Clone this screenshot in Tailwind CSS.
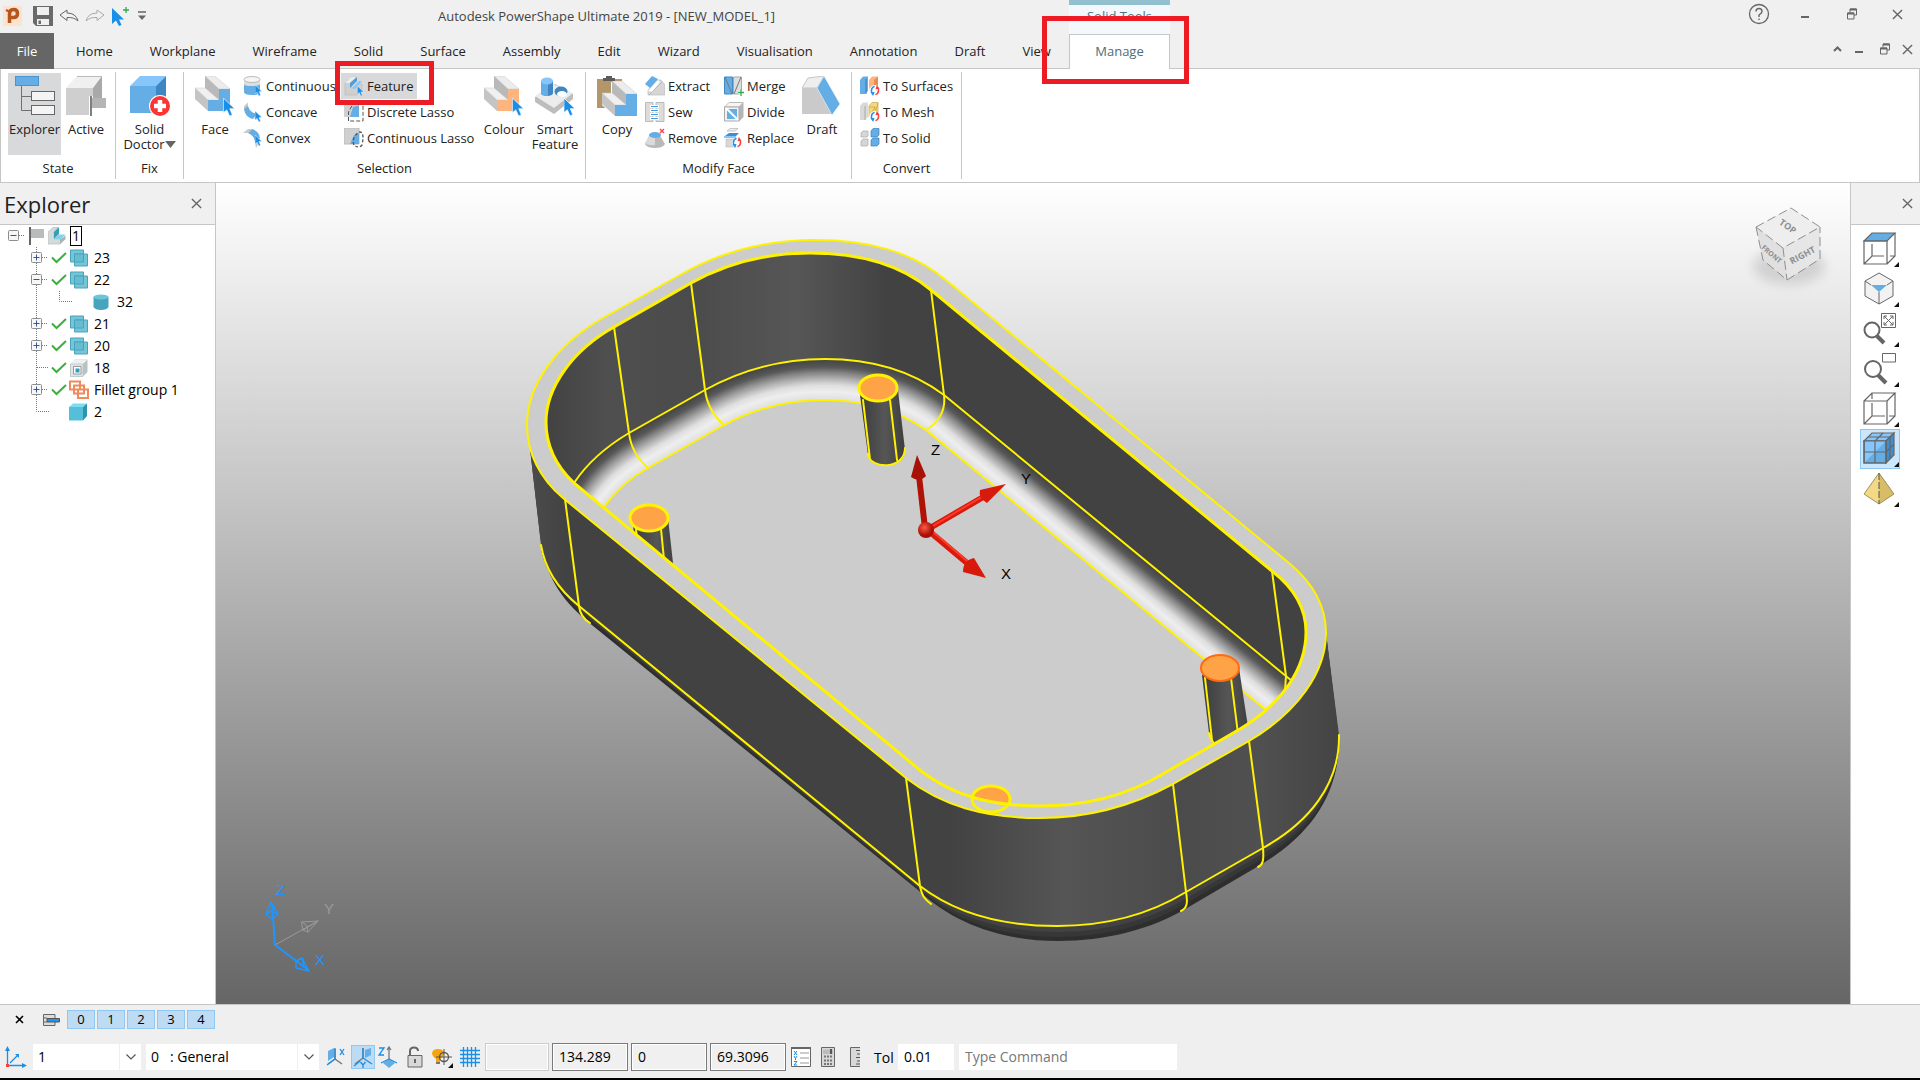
<!DOCTYPE html>
<html lang="en">
<head>
<meta charset="UTF-8">
<title>Autodesk PowerShape Ultimate 2019 - [NEW_MODEL_1]</title>
<meta name="viewport" content="width=device-width, initial-scale=1.0">
<script src="https://cdn.jsdelivr.net/npm/@tailwindcss/browser@4"></script>
<script>
addEventListener("DOMContentLoaded", () => {
    drawFillet();
});

// Inner fillet of the tray: blend from the wall edge to the floor edge
const wallEdge = [574,483, 588,462, 607,446, 629,433, 705,390, 741,370, 782,359, 825,359, 872,359, 912,371, 944,395, 1292,681];
const floorEdge = [604,507, 616,490, 630,478, 648,468, 724,425, 756,408, 790,400, 824,400, 865,400, 900,412, 926,430, 1267,711];
const shades = [[0, 68], [0.18, 88], [0.42, 165], [0.62, 222], [0.78, 238], [1, 222]];

function shadeAt(t) {
    for (let i = 1; i < shades.length; i++) {
        const [t0, s0] = shades[i - 1];
        const [t1, s1] = shades[i];
        if (t <= t1) {
            return Math.round(s0 + (s1 - s0) * (t - t0) / (t1 - t0));
        }
    }
    return 222;
}

function drawFillet() {
    const group = document.getElementById("fillet");
    const steps = 40;
    for (let i = 0; i <= steps; i++) {
        const t = i / steps;
        const p = wallEdge.map((v, k) => v + (floorEdge[k] - v) * t);
        const path = document.createElementNS("http://www.w3.org/2000/svg", "path");
        const s = i === steps ? 204 : shadeAt(t);
        path.setAttribute("d", `M${p[0]},${p[1]} C${p.slice(2, 8)} L${p[8]},${p[9]} C${p.slice(10, 16)} C${p.slice(16, 22)} L${p[22]},${p[23]} L1320,900 L500,900Z`);
        path.setAttribute("fill", `rgb(${s},${s},${s})`);
        group.appendChild(path);
    }
}
</script>
</head>
<body class="h-screen flex flex-col overflow-hidden bg-[#f0f0f0] font-['Open_Sans',sans-serif] text-[13px] text-[#222]">

<svg class="absolute size-0" aria-hidden="true">
  <defs>
    <symbol id="pointer" viewBox="0 0 10 16"><path d="M0 0V13L3 10.500L5.500 16L8 15L5.700 9.500H10Z" fill="#1a8fe8" stroke="#fff" stroke-width=".6"/></symbol>
    <symbol id="restore" viewBox="0 0 10 12"><path d="M3 4V1H9.500V7H7M.5 5H7V11H.5Z" fill="none" stroke="#666"/><path d="M3 1.500H9.500M.5 5.500H7" stroke="#666" stroke-width="2"/></symbol>
    <symbol id="close" viewBox="0 0 12 12"><path d="M1 1L11 11M11 1L1 11" stroke="#666" stroke-width="1.500"/></symbol>
    <symbol id="chevron" viewBox="0 0 10 6"><path d="M.5 .5L5 5L9.500 .5" fill="none" stroke="#555" stroke-width="1.200"/></symbol>
    <symbol id="swap" viewBox="0 0 10 12"><path d="M4.500 1.500Q0 3 1.500 8.500" fill="none" stroke="#1a8fe8" stroke-width="1.600"/><path d="M0 8L4.500 7.500L3 12Z" fill="#1a8fe8"/><path d="M5.500 10.500Q10 9 8.500 3.500" fill="none" stroke="#fa3e3e" stroke-width="1.600"/><path d="M10 4L5.500 4.500L7 0Z" fill="#fa3e3e"/></symbol>

    <!-- tree pieces -->
    <g id="box"><rect x="1.500" y="5.500" width="10" height="10" rx="1" fill="#f7f7f7" stroke="#8d8d8d"/><path d="M3.500 10.500H9.500" stroke="#35559b"/></g>
    <symbol id="t-plus" viewBox="0 0 20 22"><path d="M6.500 0V22M12 10.500H18" stroke="#777" stroke-dasharray="1 1"/><use href="#box"/><path d="M6.500 7.500V13.500" stroke="#35559b"/></symbol>
    <symbol id="t-minus" viewBox="0 0 20 22"><path d="M6.500 0V22M12 10.500H18" stroke="#777" stroke-dasharray="1 1"/><use href="#box"/></symbol>
    <symbol id="t-leaf" viewBox="0 0 20 22"><path d="M6.500 0V22M7 10.500H19" stroke="#777" stroke-dasharray="1 1"/></symbol>
    <symbol id="t-line" viewBox="0 0 20 22"><path d="M6.500 0V22" stroke="#777" stroke-dasharray="1 1"/></symbol>
    <symbol id="t-end" viewBox="0 0 20 22"><path d="M6.500 0V10.500H19" fill="none" stroke="#777" stroke-dasharray="1 1"/></symbol>
    <symbol id="check" viewBox="0 0 16 12"><path d="M1 5.500L5.500 10L15 1" fill="none" stroke="#3bb13b" stroke-width="2"/></symbol>
    <symbol id="bool" viewBox="0 0 18 18"><path d="M.5 1H13.500V13H.5Z" fill="#74c5d8" stroke="#4aa3bb"/><path d="M4.500 5H17.500V17H4.500Z" fill="#74c5d8" stroke="#4aa3bb"/><path d="M4.500 5H13.500V13H4.500Z" fill="#66bdd2" stroke="#4aa3bb"/></symbol>

    <!-- ribbon, 40px -->
    <symbol id="i-explorer" viewBox="0 0 40 40"><rect x=".5" y=".5" width="23" height="9" fill="#64ade5" stroke="#4d94cc"/><path d="M6.500 10V34.500H17M6.500 20.500H17" fill="none" stroke="#707070"/><rect x="16.500" y="15.500" width="23" height="9" fill="#f4f4f4" stroke="#666"/><rect x="16.500" y="29.500" width="23" height="9" fill="#f4f4f4" stroke="#666"/></symbol>
    <symbol id="i-active" viewBox="0 0 40 40"><path d="M0 12L11 0H36L27 12Z" fill="#f0f0f0"/><path d="M0 12H27V39H0Z" fill="#cfcfcf"/><path d="M27 12L36 0V22H27Z" fill="#a9a9a9"/><path d="M11 .5H36" stroke="#bbb"/><path d="M25 20V40" stroke="#fff" stroke-width="4"/><path d="M25 20V40" stroke="#555" stroke-width="1.500"/><path d="M26 22H40V32H26Z" fill="#b5b5b5"/></symbol>
    <symbol id="i-doctor" viewBox="0 0 40 40"><path d="M0 10L10 0H36L26 10Z" fill="#86c6fa"/><path d="M0 10H27V37H0Z" fill="#64ade5"/><path d="M26 10L36 0V27L26 37Z" fill="#3c87c4"/><circle cx="30" cy="30" r="11" fill="#fff"/><circle cx="30" cy="30" r="10" fill="#fb3434"/><path d="M30 24V36M24 30H36" stroke="#fff" stroke-width="4.500"/></symbol>
    <symbol id="steps" viewBox="0 0 40 40">
      <path d="M10 0H20L35 13H24Z" fill="#ececec" stroke="#c8c8c8" stroke-width=".5"/>
      <path d="M10 0L24 13V24L10 12Z" fill="#b9b9b9"/>
      <path d="M0 12H10L24 24H13Z" fill="#f0f0f0" stroke="#c8c8c8" stroke-width=".5"/>
      <path d="M0 12L13 24V35L0 23Z" fill="#c4c4c4"/>
      <path d="M24 13H35V35H13V24H24Z" fill="currentColor"/>
    </symbol>
    <symbol id="i-face" viewBox="0 0 40 40"><use href="#steps" color="#64ade5"/><use href="#pointer" x="28" y="22" width="12" height="18"/></symbol>
    <symbol id="i-colour" viewBox="0 0 40 40"><use href="#steps" color="#ffb37d"/><use href="#pointer" x="28" y="22" width="12" height="18"/></symbol>
    <symbol id="i-smart" viewBox="0 0 40 40"><path d="M0 21L20 8L38 18V23L19 38L0 26Z" fill="#bdbdbd"/><path d="M0 20L18 8L38 17L19 32Z" fill="#ececec"/><path d="M6 5V17C6 21 18 21 18 17V5Z" fill="#3f87c4"/><path d="M6 5V17C6 20 13 20 13 20V5Z" fill="#64ade5"/><ellipse cx="12" cy="5" rx="6" ry="3.500" fill="#86c6fa"/><ellipse cx="26" cy="15.500" rx="6.500" ry="5" fill="#3f87c4"/><ellipse cx="27" cy="18" rx="5" ry="3" fill="#fff"/><use href="#pointer" x="29" y="22" width="11" height="18"/></symbol>
    <symbol id="i-copy" viewBox="0 0 40 40"><path d="M0 3H25V32H0Z" fill="#b4966b"/><path d="M6 2H9V0H15V2H18V5H6Z" fill="#5c5c5c"/><path d="M5 17H14V6H26L40 17V40H17L5 29Z" fill="#fff"/><use href="#steps" x="5" y="5" width="40" height="40" color="#64ade5"/></symbol>
    <symbol id="i-draft" viewBox="0 0 40 40"><path d="M0 12L6 2L22 0L15 12Z" fill="#eee" stroke="#c5c5c5"/><path d="M0 12H15L30 38H0Z" fill="#cacaca"/><path d="M15 12L22 0L38 28L30 39Z" fill="#64ade5" stroke="#fff" stroke-width=".5"/></symbol>

    <!-- ribbon, 20px -->
    <symbol id="i-continuous" viewBox="0 0 20 20"><path d="M1 3V16Q1 19 9 19T17 16V3Z" fill="#64ade5"/><path d="M1 3V8Q1 10 9 10T17 8V3Z" fill="#ddd"/><ellipse cx="9" cy="3.500" rx="8" ry="3" fill="#f5f5f5" stroke="#bbb"/><use href="#pointer" x="12" y="9" width="7" height="11"/></symbol>
    <symbol id="i-concave" viewBox="0 0 20 20"><path d="M1 4L5 .5V5L1 9Z" fill="#c9c9c9"/><path d="M1 7L5 4Q7 11 14 12L10 17Q2 15 1 7Z" fill="#64ade5"/><path d="M11 17L14 13H18L15 18Z" fill="#d8d8d8"/><use href="#pointer" x="12" y="9" width="7" height="11"/></symbol>
    <symbol id="i-convex" viewBox="0 0 20 20"><path d="M0 5L5 1H9L5 5ZM12 15L16 11V15L13 20Z" fill="#c9c9c9"/><path d="M5 5L9 1Q16 3 17 10L12 15Q12 8 5 5Z" fill="#64ade5"/><use href="#pointer" x="12" y="7" width="7" height="11"/></symbol>
    <symbol id="i-feature" viewBox="0 0 20 20"><path d="M1 7L7 1H12L7 6V12H11L15 8H18V14L13 19H1Z" fill="#cfcfcf" stroke="#bbb" stroke-width=".7"/><path d="M1 7L7 1H12L6 7Z" fill="#ececec"/><path d="M6 7L13 1V5L6 12Z" fill="#4f9edb"/><path d="M8 12L15 5H18L11 13Z" fill="#86c6fa"/><use href="#pointer" x="13" y="10" width="7" height="10"/></symbol>
    <symbol id="i-dlasso" viewBox="0 0 20 20"><path d="M0 .5H13V15H0Z" fill="#d0d0d0"/><path d="M6 15L9 5L15 3V15Z" fill="#64ade5"/><path d="M4.500 19V10L9 2H19V19Z" fill="none" stroke="#555" stroke-dasharray="4 2"/></symbol>
    <symbol id="i-classo" viewBox="0 0 20 20"><path d="M0 0H15V16H0Z" fill="#d0d0d0" stroke="#bbb"/><path d="M6 16L10 7L15 5V16Z" fill="#64ade5"/><path d="M10 17Q8 13 11 8Q15 2 18 5Q20 8 18 17Q15 21 10 17Z" fill="none" stroke="#555" stroke-width="1.300" stroke-dasharray="3 2"/></symbol>
    <symbol id="i-extract" viewBox="0 0 20 20"><path d="M3 14L12 4H16L20 9V19H3Z" fill="#d6d6d6" stroke="#bbb" stroke-width=".7"/><path d="M3 15L13 4L15 6L7 16Z" fill="#fff"/><path d="M4 19L17 6" stroke="#aaa" stroke-width=".7"/><path d="M0 8L7 0L13 3L5 12Z" fill="#64ade5"/></symbol>
    <symbol id="i-sew" viewBox="0 0 20 20"><path d="M.5 .5H8V19.500H.5ZM11 .5H19V19.500H11Z" fill="#dcdcdc" stroke="#bbb"/><path d="M5 4.500H14M5 8.500H14M5 12.500H14M5 16.500H14" stroke="#fff" stroke-width="3"/><path d="M6 4.500H13M6 8.500H13M6 12.500H13M6 16.500H13" stroke="#3d9be4" stroke-width="1.200"/></symbol>
    <symbol id="i-remove" viewBox="0 0 20 20"><path d="M0 16L5 6H14L20 16Q18 20 10 20T0 16Z" fill="#b9b9b9"/><path d="M0 15L5 7H10V17Q3 18 0 15Z" fill="#dadada"/><ellipse cx="10" cy="7" rx="6" ry="3" fill="#64ade5"/><path d="M15 1L19 5M19 1L15 5" stroke="#f44" stroke-width="1.400"/></symbol>
    <symbol id="i-merge" viewBox="0 0 20 20"><path d="M.5 1H8.500V18H.5Z" fill="#64ade5" stroke="#3e8ac7"/><path d="M9.500 1H17.500V18H9.500Z" fill="#ddd" stroke="#aaa"/><path d="M1 1L8 18M17 1L10 18" stroke="#777"/><path d="M17 13V20M14 16.500H20" stroke="#fff" stroke-width="3"/><path d="M17 13V20M14 16.500H20" stroke="#34a853" stroke-width="1.300"/></symbol>
    <symbol id="i-divide" viewBox="0 0 20 20"><path d="M.5 5L5 .5H19L15 5Z" fill="#f4f4f4" stroke="#bbb"/><path d="M15 5L19.500 .5V15L15 19.500Z" fill="#b5b5b5"/><path d="M.5 5H15V19H.5Z" fill="#f2f2f2" stroke="#aaa"/><path d="M3 7H13V17H3Z" fill="#64ade5"/><path d="M2 6L14 18" stroke="#fff" stroke-width="2"/></symbol>
    <symbol id="i-replace" viewBox="0 0 20 20"><path d="M3 3L6 .5H14L11 3Z" fill="#eee" stroke="#aaa" stroke-width=".6"/><path d="M1 8L5 5H15L12 8Z" fill="#3d8ed2"/><path d="M0 8H12V10H0Z" fill="#86c6fa"/><path d="M2 11H12V19H2Z" fill="#d8d8d8" stroke="#bbb" stroke-width=".6"/><circle cx="13" cy="15" r="5" fill="#fff"/><use href="#swap" x="8" y="9" width="10" height="11"/></symbol>
    <symbol id="i-surfaces" viewBox="0 0 20 20"><path d="M0 4L3 .5H8V15L5 18H0Z" fill="#64ade5"/><path d="M9 4L12 .5H18V15H9Z" fill="#ffb37d"/><path d="M6 3V18" stroke="#3878b5"/><path d="M14 4L18 .5V15H14Z" fill="#e88e55"/><circle cx="15" cy="15" r="6" fill="#fff"/><use href="#swap" x="10" y="9" width="10" height="11"/></symbol>
    <symbol id="i-mesh" viewBox="0 0 20 20"><path d="M0 4L3 .5H8V15L5 18H0Z" fill="#d9d9d9"/><path d="M5 4V18" stroke="#aaa"/><path d="M9 4L12 .5H18V15H9Z" fill="#f3d985" stroke="#c9a93e" stroke-width=".7"/><path d="M9 5H15L9 15M15 5V12L18 1" fill="none" stroke="#c9a93e" stroke-width=".8"/><circle cx="15" cy="15" r="6" fill="#fff"/><use href="#swap" x="10" y="9" width="10" height="11"/></symbol>
    <symbol id="i-solid" viewBox="0 0 20 20"><path d="M1 5L3 3H8V8L7 9H1ZM1 13L3 11H8V17L7 18H1Z" fill="#d6d6d6" stroke="#aaa" stroke-width=".7"/><path d="M11 3L13 .5H19V7L17 9H11ZM11 12L13 10H19V16L17 18H11Z" fill="#64ade5" stroke="#3d83bf" stroke-width=".7"/></symbol>

    <g id="corner"><path d="M39 33V38H34Z" fill="#111"/></g>

    <linearGradient id="bg" x1="0" y1="0" x2="0" y2="1"><stop offset="0" stop-color="#fff"/><stop offset="1" stop-color="#666"/></linearGradient>
    <linearGradient id="outerWall" gradientUnits="userSpaceOnUse" x1="527" y1="0" x2="1340" y2="0">
      <stop offset="0" stop-color="#4c4c4c"/><stop offset=".05" stop-color="#424242"/><stop offset=".52" stop-color="#424242"/><stop offset=".66" stop-color="#555"/><stop offset=".8" stop-color="#4b4b4b"/><stop offset=".9" stop-color="#505050"/><stop offset="1" stop-color="#444"/>
    </linearGradient>
    <linearGradient id="innerWall" gradientUnits="userSpaceOnUse" x1="546" y1="0" x2="1306" y2="0">
      <stop offset="0" stop-color="#424242"/><stop offset=".08" stop-color="#4f4f4f"/><stop offset=".19" stop-color="#4b4b4b"/><stop offset=".33" stop-color="#565656"/><stop offset=".45" stop-color="#424242"/><stop offset="1" stop-color="#424242"/>
    </linearGradient>
    <linearGradient id="post" x1="0" y1="0" x2="1" y2="0"><stop offset="0" stop-color="#3c3c3c"/><stop offset=".55" stop-color="#565656"/><stop offset="1" stop-color="#3e3e3e"/></linearGradient>
    <radialGradient id="ball" cx=".4" cy=".35"><stop offset="0" stop-color="#ff5a45"/><stop offset="1" stop-color="#a80f05"/></radialGradient>
    <path id="rimIn" d="M574,483 C556,466 546,445 546,422 C546,387 573,350 614,327 L691,283 C727,263 768,253 810,253 C860,253 901,265 931,290 L1272,571 C1294,588 1306,608 1306,632 C1306,668 1283,703 1240,729 L1161,775 C1127,795 1085,806 1040,806 C994,806 955,797 921,771Z"/>
    <path id="rimOut" d="M563,498 C540,479 527,453 527,425 C527,385 556,345 603,318 L680,275 C720,252 765,240 815,240 C870,240 913,252 947,281 L1289,563 C1312,582 1326,606 1326,633 C1326,672 1298,712 1249,741 L1173,784 C1132,806 1088,818 1040,818 C985,818 942,806 906,778Z"/>
    <clipPath id="cavity"><use href="#rimIn"/></clipPath>
  </defs>
</svg>

<!-- Title bar -->
<header class="flex h-[33px] shrink-0 items-start">
  <div class="flex h-[31px] w-[438px] items-center pl-[3px]">
    <svg class="size-5" viewBox="0 0 20 20"><rect width="19" height="20" fill="#fbe3cf"/><path d="M6.500 17V8Q6.500 3.500 10.500 3.500T14.500 7.500T10.500 11.500H8" fill="none" stroke="#b5561c" stroke-width="3.500"/><path d="M3 4L7 6" stroke="#b5561c" stroke-width="2"/></svg>
    <button aria-label="Save" class="ml-[10px]"><svg class="size-5" viewBox="0 0 20 20"><path d="M0 0H20V20H3L0 17Z" fill="#6a6a6a"/><path d="M4 1H16V9H4ZM4 13H16V19H4Z" fill="#f0f0f0"/><path d="M5.500 14.500H8V18H5.500Z" fill="#6a6a6a"/></svg></button>
    <button aria-label="Undo" class="ml-[6px]"><svg class="h-[14px] w-5" viewBox="0 0 20 14"><path d="M1 6L8 1V4Q17 4 19 12Q15 8 8 8.500V11.500Z" fill="none" stroke="#666"/></svg></button>
    <button aria-label="Redo" class="ml-[6px]"><svg class="h-[14px] w-5" viewBox="0 0 20 14"><path d="M19 6L12 1V4Q3 4 1 12Q5 8 12 8.500V11.500Z" fill="none" stroke="#aaa"/></svg></button>
    <button aria-label="Add selection" class="ml-[7px]"><svg class="h-5 w-[18px]" viewBox="0 0 18 20"><path d="M0 2V18L4 14.500L7 20L9.500 19L7 13.500H12Z" fill="#1a8fe8"/><path d="M14 1V7M11 4H17" stroke="#34a853" stroke-width="1.300"/></svg></button>
    <button aria-label="Customise toolbar" class="ml-[8px]"><svg class="h-[10px] w-2" viewBox="0 0 8 10"><path d="M0 1H8" stroke="#666" stroke-width="1.500"/><path d="M0 4.500H8L4 9Z" fill="#666"/></svg></button>
  </div>
  <h1 class="w-[631px] pt-[7px] leading-[18px] text-[#444]">Autodesk PowerShape Ultimate 2019 - [NEW_MODEL_1]</h1>
  <div class="h-full w-[101px] border-t-[5px] border-[#92c0ce] bg-[#f3f8fc] pt-[2px] text-center leading-[18px] text-[#4c7484]">Solid Tools</div>
  <div class="ml-auto flex h-[28px] items-center pr-[17px]">
    <button aria-label="Help"><svg class="size-[22px]" viewBox="0 0 22 22"><circle cx="11" cy="11" r="9.500" fill="none" stroke="#666" stroke-width="1.300"/><path d="M8 8.500Q8 5.500 11 5.500T14 8.500Q14 10 11 12V14M11 15.500V17" fill="none" stroke="#666" stroke-width="1.400"/></svg></button>
    <button aria-label="Minimise" class="ml-[31px]"><svg class="size-2" viewBox="0 0 8 8"><path d="M0 7H8" stroke="#666" stroke-width="2"/></svg></button>
    <button aria-label="Restore" class="ml-[38px]"><svg class="h-3 w-[10px]"><use href="#restore"/></svg></button>
    <button aria-label="Close" class="ml-[35px]"><svg class="size-[11px]"><use href="#close"/></svg></button>
  </div>
</header>

<div class="flex h-[36px] shrink-0 leading-[18px]">
  <button class="w-[54px] bg-[#666] text-white">File</button>
  <nav class="flex w-[1015px] items-center justify-between border-b border-[#c6c6c6] pl-1">
    <button class="px-[18px]">Home</button>
    <button class="px-[18px]">Workplane</button>
    <button class="px-[18px]">Wireframe</button>
    <button class="px-[18px]">Solid</button>
    <button class="px-[18px]">Surface</button>
    <button class="px-[18px]">Assembly</button>
    <button class="px-[18px]">Edit</button>
    <button class="px-[18px]">Wizard</button>
    <button class="px-[18px]">Visualisation</button>
    <button class="px-[18px]">Annotation</button>
    <button class="px-[18px]">Draft</button>
    <button class="px-[18px]">View</button>
  </nav>
  <div class="relative w-[101px] bg-[#f3f8fc]">
    <button class="mt-px h-[35px] w-full border-x border-t border-[#c6c6c6] bg-white pb-[2px] text-[#4c6c7c]">Manage</button>
    <div class="pointer-events-none absolute -top-[17px] -bottom-[15px] -left-[27px] -right-[19px] z-10 border-5 border-[#ed1c24]"></div>
  </div>
  <div class="flex flex-1 items-center justify-end border-b border-[#c6c6c6] pr-[7px] pb-[3px]">
    <button aria-label="Collapse ribbon"><svg class="h-[6px] w-[9px]" viewBox="0 0 9 6"><path d="M1 5L4.500 1.500L8 5" fill="none" stroke="#666" stroke-width="2"/></svg></button>
    <button aria-label="Minimise document" class="ml-[13px]"><svg class="size-2" viewBox="0 0 8 8"><path d="M0 7H8" stroke="#666" stroke-width="2"/></svg></button>
    <button aria-label="Restore document" class="ml-[17px]"><svg class="h-3 w-[10px]"><use href="#restore"/></svg></button>
    <button aria-label="Close document" class="ml-[12px]"><svg class="size-[11px]"><use href="#close"/></svg></button>
  </div>
</div>

<!-- Ribbon -->
<div class="flex h-[114px] shrink-0 border-x border-b border-[#c6c6c6] bg-white py-[3px]">
  <section class="flex w-[115px] flex-col border-r border-[#c6c6c6]">
    <div class="flex h-[83px] pt-px pl-[7px] leading-[15px]">
      <button class="flex w-[53px] flex-col items-center bg-[#d8d9db] pt-[3px]"><svg class="mb-[6px] size-10 shrink-0"><use href="#i-explorer"/></svg>Explorer</button>
      <button class="flex w-[50px] flex-col items-center pt-[3px]"><svg class="mb-[6px] size-10 shrink-0"><use href="#i-active"/></svg>Active</button>
    </div>
    <h2 class="pt-1 text-center leading-[18px]">State</h2>
  </section>
  <section class="flex w-[68px] flex-col border-r border-[#c6c6c6]">
    <div class="flex h-[83px] justify-center pt-px leading-[15px]">
      <button class="flex flex-col items-center pt-[3px]"><svg class="mb-[6px] size-10 shrink-0"><use href="#i-doctor"/></svg>Solid<span class="flex items-center">Doctor<svg class="h-[7px] w-[11px]" viewBox="0 0 11 7"><path d="M0 0H11L5.500 7Z" fill="#666"/></svg></span></button>
    </div>
    <h2 class="pt-1 text-center leading-[18px]">Fix</h2>
  </section>
  <section class="flex w-[402px] flex-col border-r border-[#c6c6c6]">
    <div class="flex h-[83px] pt-px pl-[6px] leading-[15px]">
      <button class="flex w-[50px] flex-col items-center pt-[3px]"><svg class="mb-[6px] size-10 shrink-0"><use href="#i-face"/></svg>Face</button>
      <div class="flex w-[101px] flex-col items-start">
        <button class="flex h-[26px] items-center gap-[3px] px-[3px]"><svg class="size-5"><use href="#i-continuous"/></svg>Continuous</button>
        <button class="flex h-[26px] items-center gap-[3px] px-[3px]"><svg class="size-5"><use href="#i-concave"/></svg>Concave</button>
        <button class="flex h-[26px] items-center gap-[3px] px-[3px]"><svg class="size-5"><use href="#i-convex"/></svg>Convex</button>
      </div>
      <div class="flex w-[138px] flex-col items-start whitespace-nowrap">
        <button class="relative flex h-[26px] w-[76px] items-center gap-[3px] bg-[#d8d9db] px-[3px]"><svg class="size-5"><use href="#i-feature"/></svg>Feature
          <span class="pointer-events-none absolute -top-[12px] -bottom-[6px] -left-[6px] -right-[17px] z-10 border-5 border-[#ed1c24]"></span>
        </button>
        <button class="flex h-[26px] items-center gap-[3px] px-[3px]"><svg class="size-5"><use href="#i-dlasso"/></svg>Discrete Lasso</button>
        <button class="flex h-[26px] items-center gap-[3px] px-[3px]"><svg class="size-5"><use href="#i-classo"/></svg>Continuous Lasso</button>
      </div>
      <button class="flex w-[50px] flex-col items-center pt-[3px]"><svg class="mb-[6px] size-10 shrink-0"><use href="#i-colour"/></svg>Colour</button>
      <button class="flex w-[52px] flex-col items-center pt-[3px]"><svg class="mb-[6px] size-10 shrink-0"><use href="#i-smart"/></svg>Smart<br>Feature</button>
    </div>
    <h2 class="pt-1 text-center leading-[18px]">Selection</h2>
  </section>
  <section class="flex w-[266px] flex-col border-r border-[#c6c6c6]">
    <div class="flex h-[83px] pt-px pl-[6px] leading-[15px]">
      <button class="flex w-[50px] flex-col items-center pt-[3px]"><svg class="mb-[6px] size-10 shrink-0"><use href="#i-copy"/></svg>Copy</button>
      <div class="flex w-[79px] flex-col items-start">
        <button class="flex h-[26px] items-center gap-[3px] px-[3px]"><svg class="size-5"><use href="#i-extract"/></svg>Extract</button>
        <button class="flex h-[26px] items-center gap-[3px] px-[3px]"><svg class="size-5"><use href="#i-sew"/></svg>Sew</button>
        <button class="flex h-[26px] items-center gap-[3px] px-[3px]"><svg class="size-5"><use href="#i-remove"/></svg>Remove</button>
      </div>
      <div class="flex w-[76px] flex-col items-start">
        <button class="flex h-[26px] items-center gap-[3px] px-[3px]"><svg class="size-5"><use href="#i-merge"/></svg>Merge</button>
        <button class="flex h-[26px] items-center gap-[3px] px-[3px]"><svg class="size-5"><use href="#i-divide"/></svg>Divide</button>
        <button class="flex h-[26px] items-center gap-[3px] px-[3px]"><svg class="size-5"><use href="#i-replace"/></svg>Replace</button>
      </div>
      <button class="flex w-[50px] flex-col items-center pt-[3px]"><svg class="mb-[6px] size-10 shrink-0"><use href="#i-draft"/></svg>Draft</button>
    </div>
    <h2 class="pt-1 text-center leading-[18px]">Modify Face</h2>
  </section>
  <section class="flex w-[110px] flex-col border-r border-[#c6c6c6]">
    <div class="flex h-[83px] flex-col items-start pt-px pl-[5px] leading-[15px]">
      <button class="flex h-[26px] items-center gap-[3px] px-[3px]"><svg class="size-5"><use href="#i-surfaces"/></svg>To Surfaces</button>
      <button class="flex h-[26px] items-center gap-[3px] px-[3px]"><svg class="size-5"><use href="#i-mesh"/></svg>To Mesh</button>
      <button class="flex h-[26px] items-center gap-[3px] px-[3px]"><svg class="size-5"><use href="#i-solid"/></svg>To Solid</button>
    </div>
    <h2 class="pt-1 text-center leading-[18px]">Convert</h2>
  </section>
</div>

<main class="flex min-h-0 flex-1">
  <!-- Explorer -->
  <aside class="w-[216px] shrink-0 border-r border-[#c6c6c6] bg-white">
    <div class="flex h-[42px] items-center justify-between border-b border-[#c6c6c6] bg-[#f0f0f0] pr-[13px] pl-1">
      <h2 class="text-[22px] leading-[30px]">Explorer</h2>
      <button aria-label="Close Explorer"><svg class="size-[11px]"><use href="#close"/></svg></button>
    </div>
    <ul class="text-[14px] leading-[22px] text-black">
      <li class="flex h-[22px] items-center pl-[7px]">
        <svg class="h-[22px] w-5" viewBox="0 0 20 22"><path d="M12 10.500H18" stroke="#777" stroke-dasharray="1 1"/><use href="#box"/></svg>
        <svg class="ml-[2px] h-[18px] w-4" viewBox="0 0 16 18"><path d="M1 0V18" stroke="#666" stroke-width="2"/><path d="M2 2H15V11H2Z" fill="#b9bcbb"/></svg>
        <svg class="ml-[3px] size-[18px]" viewBox="0 0 18 18"><path d="M0 5L5 .5H10L6 5V12H17L12 17H0Z" fill="#d3dada" stroke="#b5bdbd" stroke-width=".7"/><path d="M12 17L17.500 12V8.500L12 12.500Z" fill="#aab4b4"/><path d="M6 5L11 0V7L6 12Z" fill="#3a9db8"/><path d="M6 12L11 7.500H17.500L13 12Z" fill="#7fd4e8"/></svg>
        <span class="ml-1 border border-black px-px leading-[18px]">1</span>
      </li>
      <li class="flex h-[22px] items-center pl-[30px]"><svg class="h-[22px] w-5"><use href="#t-plus"/></svg><svg class="ml-px h-3 w-4"><use href="#check"/></svg><svg class="ml-[3px] size-[18px]"><use href="#bool"/></svg><span class="ml-[6px]">23</span></li>
      <li class="flex h-[22px] items-center pl-[30px]"><svg class="h-[22px] w-5"><use href="#t-minus"/></svg><svg class="ml-px h-3 w-4"><use href="#check"/></svg><svg class="ml-[3px] size-[18px]"><use href="#bool"/></svg><span class="ml-[6px]">22</span></li>
      <li class="flex h-[22px] items-center pl-[30px]"><svg class="h-[22px] w-5"><use href="#t-line"/></svg><svg class="ml-[3px] h-[22px] w-5"><use href="#t-end"/></svg>
        <svg class="ml-5 h-4 w-4" viewBox="0 0 16 16"><path d="M.5 3V13Q2 16 8 16T15.500 13V3Z" fill="#46a5bc"/><ellipse cx="8" cy="3" rx="7.500" ry="2.500" fill="#6cc6da"/></svg><span class="ml-[8px]">32</span></li>
      <li class="flex h-[22px] items-center pl-[30px]"><svg class="h-[22px] w-5"><use href="#t-plus"/></svg><svg class="ml-px h-3 w-4"><use href="#check"/></svg><svg class="ml-[3px] size-[18px]"><use href="#bool"/></svg><span class="ml-[6px]">21</span></li>
      <li class="flex h-[22px] items-center pl-[30px]"><svg class="h-[22px] w-5"><use href="#t-plus"/></svg><svg class="ml-px h-3 w-4"><use href="#check"/></svg><svg class="ml-[3px] size-[18px]"><use href="#bool"/></svg><span class="ml-[6px]">20</span></li>
      <li class="flex h-[22px] items-center pl-[30px]"><svg class="h-[22px] w-5"><use href="#t-leaf"/></svg><svg class="ml-px h-3 w-4"><use href="#check"/></svg>
        <svg class="ml-[3px] size-[18px]" viewBox="0 0 18 18"><path d="M.5 5L5 .5H17.500V13L13 17.500H.5Z" fill="#b9c1c1"/><path d="M.5 5L5 .5H17.500L13 5Z" fill="#eef1f1"/><path d="M.5 5H13V17.500H.5Z" fill="#dfe4e4" stroke="#b9c1c1" stroke-width=".7"/><path d="M3.500 7.500H11V15H3.500Z" fill="#fff" stroke="#999"/><path d="M5.500 9.500H9.500V13.500H5.500Z" fill="#2d9fbd"/></svg><span class="ml-[6px]">18</span></li>
      <li class="flex h-[22px] items-center pl-[30px]"><svg class="h-[22px] w-5"><use href="#t-plus"/></svg><svg class="ml-px h-3 w-4"><use href="#check"/></svg>
        <svg class="ml-[2px] h-5 w-5" viewBox="0 0 20 20"><path d="M1 1.500H11V9.500H1ZM5 5.500H15V13.500H5ZM9 9.500H19V18H9Z" fill="none" stroke="#ee8a5c" stroke-width="2"/></svg><span class="ml-[5px]">Fillet group 1</span></li>
      <li class="flex h-[22px] items-center pl-[30px]"><svg class="h-[22px] w-5"><use href="#t-end"/></svg>
        <svg class="ml-[19px] size-[18px]" viewBox="0 0 18 18"><path d="M0 4L4 .5H18L14 4Z" fill="#7fdbee"/><path d="M14 4L18 .5V13L14 17.500Z" fill="#2f93ad"/><path d="M0 4H14V17.500H0Z" fill="#55bfd9"/></svg><span class="ml-[7px]">2</span></li>
    </ul>
  </aside>

  <!-- Model view -->
  <section class="min-w-0 flex-1">
    <svg class="size-full" viewBox="216 183 1634 821" preserveAspectRatio="xMidYMid slice" fill="none" stroke-linecap="round" stroke-linejoin="round">
      <rect x="0" y="183" width="2066" height="821" fill="url(#bg)"/>

      <!-- outside of the tray -->
      <path d="M529,440 L540,535 C545,575 560,598 587,621 L918,890 C955,925 1005,941 1058,941 C1105,941 1150,930 1187,908 L1262,864 C1310,835 1339,795 1339,740 L1326,633 L927,500Z" fill="#2e2e2e"/>
      <path d="M541,550 C546,573 560,593 584,615 L919,889 C955,922 1004,937 1057,937 C1105,937 1150,925 1187,903 L1262,859 C1309,831 1340,792 1339,738 L900,600Z" fill="#373737"/>
      <path d="M541,548 C546,571 560,590 581,611 L919,888 C955,918 1004,932 1057,932 C1105,932 1150,920 1187,898 L1262,854 C1309,828 1340,788 1339,738 L900,600Z" fill="#424242"/>
      <path d="M529,440 L541,545 C545,570 558,589 579,606 L920,886 C955,913 1003,926 1057,926 C1105,926 1150,914 1186,892 L1263,848 C1308,823 1340,785 1339,735 L1326,633 L900,500Z" fill="url(#outerWall)"/>
      <use href="#rimOut" fill="#ccc"/>

      <!-- cavity -->
      <g clip-path="url(#cavity)">
        <rect x="540" y="240" width="780" height="580" fill="url(#innerWall)"/>
        <g id="fillet"></g>
        <g stroke="#fff200" stroke-width="2">
          <path d="M574,483 C588,462 607,446 629,433 L705,390 C741,370 782,359 825,359 C872,359 912,371 944,395 L1292,681"/>
          <path d="M604,507 C616,490 630,478 648,468 L724,425 C756,408 790,400 824,400 C865,400 900,412 926,430 L1267,711"/>
          <path d="M614,327 L629,433 C631,450 640,461 648,468M691,283 L705,390 C707,406 716,418 724,425M931,290 L944,395 C946,411 938,423 926,430M1272,571 L1286,676 L1285,690"/>
        </g>
        <path d="M633,525 L640,590 H676 L668,518Z" fill="url(#post)"/>
        <path d="M636,529 L642,590M661,529 L667,590" stroke="#fff200" stroke-width="2"/>
        <path d="M860,395 L868,455 C870,470 905,470 905,450 L898,390Z" fill="url(#post)"/>
        <path d="M863,400 L870,459M890,400 L897,460M868,454 C870,470 905,470 905,448" stroke="#fff200" stroke-width="2"/>
        <path d="M1202,675 L1209,733 Q1212,748 1225,750 L1250,740 L1239,668Z" fill="url(#post)"/>
        <path d="M1205,678 L1212,740M1231,678 L1238,734M1209,733 Q1210,741 1216,744" stroke="#fff200" stroke-width="2"/>
        <ellipse cx="991" cy="799" rx="19" ry="13" fill="#ffa347"/>
      </g>
      <g fill="#ffa347" stroke-width="3">
        <ellipse cx="878" cy="388" rx="19" ry="13" stroke="#fff200"/>
        <ellipse cx="649" cy="518" rx="19" ry="13" stroke="#fff200"/>
        <ellipse cx="1220" cy="668" rx="19" ry="13" stroke="#ff6a13" stroke-width="2"/>
        <ellipse cx="991" cy="799" rx="19" ry="13" fill="none" stroke="#fff200"/>
      </g>

      <g stroke="#fff200" stroke-width="2">
        <use href="#rimOut"/>
        <use href="#rimIn" stroke-width="3"/>
        <path d="M541,545 C545,570 558,589 579,606 L920,886 C955,913 1003,926 1057,926 C1105,926 1150,914 1186,892 L1263,848 C1308,823 1340,785 1339,735"/>
        <path d="M565,499 L579,606 C580,615 585,620 590,623M906,778 L920,886 C922,897 926,900 931,904M1173,784 L1186,892 C1188,903 1187,908 1181,911M1249,741 L1263,848 C1264,860 1263,865 1258,867"/>
      </g>

      <!-- workplane -->
      <path d="M925,528 L919,476" stroke="#b01205" stroke-width="6"/>
      <path d="M930,528 L985,496M930,532 L967,563" stroke="#d81a0c" stroke-width="6"/>
      <path d="M931,527 L985,495M932,531 L967,561" stroke="#ff3a28" stroke-width="2"/>
      <path d="M917,455 L926,476 Q919,483 911,477Z" fill="#a81204"/>
      <path d="M1006,484 L987,503 Q978,498 980,490Z" fill="#d81a0c"/>
      <path d="M986,578 L963,572 Q963,560 974,558Z" fill="#d81a0c"/>
      <circle cx="926" cy="530" r="8" fill="url(#ball)"/>
      <g fill="#000" class="font-['Liberation_Sans',sans-serif] text-[15px]"><text x="931" y="455">Z</text><text x="1021" y="484">Y</text><text x="1001" y="579">X</text></g>

      <!-- view triad -->
      <path d="M275,945 L318,921M302,922 L318,921 L308,932 L303,930ZM318,921 L303,930M302,922L307,926L308,932" stroke="#9a9a9a"/>
      <path d="M275,945 L272,904M275,945 L307,969" stroke="#1e96ff" stroke-width="2"/>
      <path d="M271,902 L266,914 L272,919 L278,914ZM266,914 L271,911 L278,914M309,971 L302,958 L296,961 L296,968ZM296,961 L304,967 L302,958" stroke="#1e96ff" stroke-width="1.500"/>
      <g class="font-['Liberation_Sans',sans-serif] text-[15px]"><text x="276" y="895" fill="#1e96ff">Z</text><text x="324" y="914" fill="#9a9a9a">Y</text><text x="315" y="965" fill="#1e96ff">X</text></g>

      <!-- view cube -->
      <ellipse cx="1789" cy="266" rx="36" ry="18" fill="#000" opacity=".12" class="blur-[6px]"/>
      <path d="M1756,227 L1791,208 L1820,227 L1783,248Z" fill="#eee"/>
      <path d="M1756,227 L1783,248 L1787,280 L1763,260Z" fill="#e0e0e0"/>
      <path d="M1783,248 L1820,227 V259 L1787,280Z" fill="#e6e6e6"/>
      <path d="M1756,227 L1791,208 L1820,227 L1783,248ZL1763,260 L1787,280 L1820,259 V227M1783,248 L1787,280" stroke="#8f8f8f" stroke-dasharray="9 4" stroke-linecap="butt"/>
      <g fill="#8d8f92" class="font-['Open_Sans',sans-serif] text-[9px] font-bold" text-anchor="middle">
        <text transform="translate(1786,229) rotate(35)">TOP</text>
        <text transform="translate(1804,258) rotate(-28)">RIGHT</text>
        <text transform="translate(1770,256) rotate(40)" class="text-[7px]">FRONT</text>
      </g>
    </svg>
  </section>

  <!-- View tools -->
  <aside class="w-[70px] shrink-0 border-l border-[#c6c6c6] bg-white">
    <div class="flex h-[42px] items-center justify-end border-b border-[#c6c6c6] bg-[#f0f0f0] pr-[7px]">
      <button aria-label="Close view toolbar"><svg class="size-[11px]"><use href="#close"/></svg></button>
    </div>
    <div class="flex flex-col pt-1 pl-[9px]">
      <button aria-label="View from top" class="size-10"><svg class="size-10" viewBox="0 0 40 40" fill="none" stroke="#666" stroke-width="1.200"><path d="M4 12L12 4H35L27 12Z" fill="#64ade5"/><path d="M4 12H27V35H4ZM27 35L35 27V4M4 35L12 27H24M12 27V15M30 27H35"/><use href="#corner" stroke="none"/></svg></button>
      <button aria-label="Isometric view" class="size-10"><svg class="size-10" viewBox="0 0 40 40" stroke="#666"><path d="M19 4L33 12V27L19 35L5 27V12Z" fill="#f2f2f2"/><path d="M19 23V35" /><path d="M11 16H27L19 23Z" fill="#64ade5" stroke="none"/><path d="M5 12L11 16M33 12L27 16"/><use href="#corner" stroke="none"/></svg></button>
      <button aria-label="Resize to fit" class="size-10"><svg class="size-10" viewBox="0 0 40 40" fill="none" stroke="#666"><circle cx="12" cy="21" r="7.500" stroke-width="2"/><path d="M17 27L24 34" stroke-width="4"/><path d="M21.500 4.500H35.500V18.500H21.500ZM24 7L33 16M33 7L24 16M24 10V7H27M30 7H33V10M33 13V16H30M27 16H24V13"/><use href="#corner" stroke="none"/></svg></button>
      <button aria-label="Zoom to box" class="size-10"><svg class="size-10" viewBox="0 0 40 40" fill="none" stroke="#666"><circle cx="13" cy="20" r="8" stroke-width="2"/><path d="M18 26L26 34" stroke-width="4"/><path d="M22.500 4.500H35.500V13H22.500Z"/><use href="#corner" stroke="none"/></svg></button>
      <button aria-label="Wireframe view" class="size-10"><svg class="size-10" viewBox="0 0 40 40" fill="none" stroke="#666" stroke-width="1.200"><path d="M4 12H27V35H4ZM4 12L12 4H35L27 12M27 35L35 27V4M4 35L12 27H25M12 27V14M12 4V10M29 27H35"/><use href="#corner" stroke="none"/></svg></button>
      <button aria-label="Shaded wireframe view" class="h-10 w-10 border border-[#8ec9f5] bg-[#cce6fb]"><svg class="size-[38px]" viewBox="1 1 38 38" stroke="#666" stroke-width="1.200"><path d="M4 12L12 4H34L26 12Z" fill="#86c6fa"/><path d="M26 12L34 4V26L26 34Z" fill="#3f8ed0"/><path d="M4 12H26V34H4Z" fill="#64ade5"/><path d="M5 12H26L5 33Z" fill="#86c6fa" stroke="none"/><path d="M4 12H26V34H4ZM15 12V34M4 23H26M15 12L23 4M8 8H30M30 8V30M26 23L34 15" fill="none"/><use href="#corner" stroke="none"/></svg></button>
      <button aria-label="Draft shading" class="size-10"><svg class="size-10" viewBox="0 0 40 40"><path d="M19 4L4 25L19 35Z" fill="#f3d985"/><path d="M19 4L34 25L19 35Z" fill="#d9bd66"/><path d="M19 4L4 25L19 35L34 25Z" fill="none" stroke="#8a7a4a" stroke-width=".8"/><path d="M19 4V35" stroke="#555" stroke-dasharray="7 2"/><use href="#corner"/></svg></button>
    </div>
  </aside>
</main>

<!-- Status bars -->
<footer class="h-[76px] shrink-0 border-t border-b-2 border-t-[#c6c6c6] border-b-black bg-[#efefef] text-[14px] text-black">
  <div class="flex h-[24px] items-center pt-[5px] pl-[15px] leading-[17px]">
    <button aria-label="Close levels"><svg class="size-[9px]" viewBox="0 0 9 9"><path d="M1 1L8 8M8 1L1 8" stroke="#000" stroke-width="1.600"/></svg></button>
    <svg class="mr-[7px] ml-[19px] h-3 w-[17px]" viewBox="0 0 17 12"><path d="M.5 .5H12V11.500H.5Z" fill="#ddd" stroke="#666"/><path d="M4 4.500H16.500V8H4Z" fill="#1e96f0" stroke="#555"/><path d="M0 4H4M0 8H4" stroke="#666"/></svg>
    <div class="flex gap-[2px] text-[13px]">
      <button class="h-[19px] w-7 border border-[#91c8f2] bg-[#bddbf3]">0</button>
      <button class="h-[19px] w-7 border border-[#91c8f2] bg-[#bddbf3]">1</button>
      <button class="h-[19px] w-7 border border-[#91c8f2] bg-[#bddbf3]">2</button>
      <button class="h-[19px] w-7 border border-[#91c8f2] bg-[#bddbf3]">3</button>
      <button class="h-[19px] w-7 border border-[#91c8f2] bg-[#bddbf3]">4</button>
    </div>
  </div>
  <div class="mt-[14px] flex h-7 items-center pl-[5px]">
    <svg class="mr-[6px] size-[22px]" viewBox="0 0 22 22"><path d="M2.500 20V3M2.500 19.500H19M5 17L13 9" fill="none" stroke="#1a8fe8" stroke-width="1.300"/><path d="M2.500 0L5 5H0ZM22 19.500L17 17V22ZM14 8V12L10 8Z" fill="#1a8fe8"/><path d="M1 18H4V21H1Z" fill="#fa3e3e"/></svg>
    <div class="flex h-[26px] w-[108px] items-center bg-white pr-[5px]">
      <select aria-label="Workplane" class="h-full flex-1 appearance-none border-r border-[#efefef] pb-[2px] pl-[5px]"><option>1</option></select>
      <svg class="ml-[6px] h-[6px] w-[10px]"><use href="#chevron"/></svg>
    </div>
    <div class="ml-[5px] flex h-[26px] w-[173px] items-center bg-white pr-[5px]">
      <select aria-label="Level" class="h-full flex-1 appearance-none border-r border-[#efefef] pb-[2px] pl-[5px]"><option>0 &nbsp;&nbsp;: General</option></select>
      <svg class="ml-[6px] h-[6px] w-[10px]"><use href="#chevron"/></svg>
    </div>
    <div class="ml-[6px] flex items-center">
      <button aria-label="X principal plane"><svg class="size-6" viewBox="0 0 24 24"><path d="M10 14V4M10 14L3 19M10 14L17 19" fill="none" stroke="#777" stroke-width="1.500"/><path d="M3 6L9 3V12L3 16Z" fill="#64ade5"/><path d="M10 14V3M10 14L2 20" stroke="#1a8fe8" stroke-width="1.300"/><path d="M15 4L19 10M19 4L15 10" stroke="#1a8fe8" stroke-width="1.300"/></svg></button>
      <button aria-label="Y principal plane" class="ml-[2px] border border-[#91c8f2] bg-[#bddbf3]"><svg class="size-[22px]" viewBox="0 0 22 22"><path d="M13 4L19 2V9L13 12Z" fill="#64ade5"/><path d="M11 12V2M11 12L3 18" stroke="#777" stroke-width="1.300"/><path d="M11 12V2M11 12L20 18M8 15L2 20M8.500 16L11 19L13.500 16M11 19V22" fill="none" stroke="#1a8fe8" stroke-width="1.300"/></svg></button>
      <button aria-label="Z principal plane" class="ml-[2px]"><svg class="size-6" viewBox="0 0 24 24"><path d="M12 14L18 18L12 23L6 18Z" fill="#64ade5"/><path d="M12 14V3M10 5L12 2L14 5" fill="none" stroke="#777" stroke-width="1.300"/><path d="M12 14L4 18M12 14L20 18M2 3H7L2 10H7" fill="none" stroke="#1a8fe8" stroke-width="1.300"/></svg></button>
      <button aria-label="Lock workplane" class="ml-[6px]"><svg class="h-[22px] w-4" viewBox="0 0 16 22"><path d="M3 9V5Q3 1.500 7 1.500Q11 1.500 11 5" fill="none" stroke="#666" stroke-width="2"/><path d="M1 9.500H15V21H1Z" fill="#d8d8d8" stroke="#666"/><path d="M8 13V17" stroke="#666" stroke-width="2"/></svg></button>
      <button aria-label="Intelligent cursor" class="ml-[9px]"><svg class="h-[22px] w-[22px]" viewBox="0 0 22 22"><path d="M0 8Q0 3 6 3T12 8Q11 11 8 13V16H4V13Q1 11 0 8Z" fill="#f5a50b"/><path d="M4 16H8V18H4Z" fill="#777"/><circle cx="12" cy="11" r="4.500" fill="none" stroke="#555" stroke-width="1.300"/><path d="M12 3V19M4 11H20" stroke="#555"/><path d="M21 17V22H16Z" fill="#111"/></svg></button>
      <button aria-label="Grid" class="ml-[6px]"><svg class="size-5" viewBox="0 0 20 20"><path d="M3.500 0V20M7.500 0V20M11.500 0V20M15.500 0V20M0 3.500H20M0 7.500H20M0 11.500H20M0 15.500H20" stroke="#1a8fe8" stroke-width="1.300"/></svg></button>
    </div>
    <div class="ml-[5px] flex gap-[3px]">
      <input aria-label="Cursor value" disabled class="h-7 w-16 border border-[#ccc] bg-[#f0f0f0] ring-1 ring-white ring-inset">
      <input aria-label="X" value="134.289" class="h-7 w-[76px] border border-[#7a7a7a] bg-[#f0f0f0] px-[6px] pb-[2px] ring-1 ring-white ring-inset">
      <input aria-label="Y" value="0" class="h-7 w-[76px] border border-[#7a7a7a] bg-[#f0f0f0] px-[6px] pb-[2px] ring-1 ring-white ring-inset">
      <input aria-label="Z" value="69.3096" class="h-7 w-[76px] border border-[#7a7a7a] bg-[#f0f0f0] px-[6px] pb-[2px] ring-1 ring-white ring-inset">
    </div>
    <button aria-label="Position entry" class="ml-[5px]"><svg class="h-5 w-5" viewBox="0 0 20 20"><path d="M.5 .5H19.500V19.500H.5Z" fill="#fff" stroke="#666"/><path d="M0 1H20" stroke="#666" stroke-width="2"/><path d="M9 6H18M9 11H18M9 16H18" stroke="#ccc" stroke-width="2"/><path d="M3 4L6 8M6 4L3 8M3 9L4.500 11.500L6 9M4.500 11V13M3 14.500H6L3 18H6" fill="none" stroke="#1a8fe8"/></svg></button>
    <button aria-label="Calculator" class="ml-[10px]"><svg class="h-5 w-[14px]" viewBox="0 0 14 20"><path d="M.5 .5H13.500V19.500H.5Z" fill="#d8d8d8" stroke="#666"/><path d="M2 2.500H12V7H2Z" fill="#bbb"/><path d="M9 2V7H11V2Z" fill="#555"/><path d="M3 9.500H11.500M3 13.500H11.500M3 17H11.500" stroke="#777" stroke-width="2" stroke-dasharray="2 1"/></svg></button>
    <button aria-label="Measure" class="ml-[15px]"><svg class="h-5 w-[10px]" viewBox="0 0 10 20"><path d="M10 .5H.5V19.500H10" fill="#d8d8d8" stroke="#666"/><path d="M6 3.500H10M7 7H10M6 10.500H10M7 14H10M6 17H10" stroke="#555"/></svg></button>
    <label for="tol" class="ml-[14px] w-6">Tol</label>
    <input id="tol" value="0.01" class="h-[26px] w-14 bg-white px-[6px] pb-[2px]">
    <input aria-label="Command" placeholder="Type Command" class="ml-[5px] h-[26px] w-[218px] bg-white px-[6px] pb-[2px] placeholder:text-[#777]">
  </div>
</footer>
</body>
</html>
